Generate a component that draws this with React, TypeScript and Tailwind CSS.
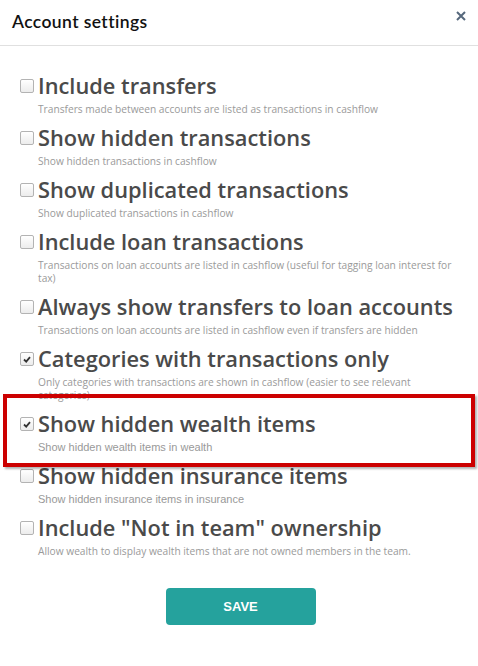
import React from "react";

interface Setting {
  id: string;
  label: string;
  hint: string;
  checked: boolean;
  plainHint?: boolean;
}

const settings: Setting[] = [
  {
    id: "transfers",
    label: "Include transfers",
    hint: "Transfers made between accounts are listed as transactions in cashflow",
    checked: false,
  },
  {
    id: "hidden",
    label: "Show hidden transactions",
    hint: "Show hidden transactions in cashflow",
    checked: false,
  },
  {
    id: "duplicated",
    label: "Show duplicated transactions",
    hint: "Show duplicated transactions in cashflow",
    checked: false,
  },
  {
    id: "loan",
    label: "Include loan transactions",
    hint: "Transactions on loan accounts are listed in cashflow (useful for tagging loan interest for tax)",
    checked: false,
  },
  {
    id: "loanTransfers",
    label: "Always show transfers to loan accounts",
    hint: "Transactions on loan accounts are listed in cashflow even if transfers are hidden",
    checked: false,
  },
  {
    id: "categories",
    label: "Categories with transactions only",
    hint: "Only categories with transactions are shown in cashflow (easier to see relevant categories)",
    checked: true,
  },
  {
    id: "wealth",
    label: "Show hidden wealth items",
    hint: "Show hidden wealth items in wealth",
    checked: true,
    plainHint: true,
  },
  {
    id: "insurance",
    label: "Show hidden insurance items",
    hint: "Show hidden insurance items in insurance",
    checked: false,
    plainHint: true,
  },
  {
    id: "team",
    label: 'Include "Not in team" ownership',
    hint: "Allow wealth to display wealth items that are not owned members in the team.",
    checked: false,
  },
];

function Checkbox({ checked }: { checked: boolean }) {
  return (
    <span className="mt-[7px] flex h-[14px] w-[14px] shrink-0 items-center justify-center rounded-[2px] border border-[#b3b3b3] bg-gradient-to-b from-white to-[#ececec]">
      {checked && (
        <svg width="8" height="7" viewBox="0 0 8 7">
          <path d="M1 3.5 L3.2 5.6 L7 1.2" fill="none" stroke="#333" strokeWidth="1.8" />
        </svg>
      )}
    </span>
  );
}

export default function App() {
  return (
    <div className="relative h-[666px] w-[478px] bg-white" style={{ fontFamily: "'Open Sans', sans-serif" }}>
      <div className="flex h-[46px] items-center justify-between border-b border-[#e0e0e0] pl-3 pr-3">
        <h1 className="font-['Lato',sans-serif] text-[17.5px] font-semibold tracking-[0.4px] text-[#111]">Account settings</h1>
        <button className="mb-[14px] text-[#56687c]">
          <svg width="10" height="10" viewBox="0 0 10 10">
            <path d="M1 1 L9 9 M9 1 L1 9" stroke="currentColor" strokeWidth="2" />
          </svg>
        </button>
      </div>

      <div className="pl-5 pr-4 pt-[26px]">
        {settings.map((s) => (
          <div key={s.id} className="mb-[8px] flex gap-1">
            <Checkbox checked={s.checked} />
            <div>
              <div className="text-[21.8px] font-semibold leading-[28px] text-[#4a4a4a]">{s.label}</div>
              <div
                className={
                  s.plainHint
                    ? "pt-[3px] font-['Liberation_Sans',sans-serif] text-[11px] leading-[13px] text-[#999]"
                    : "pt-[3px] text-[10.2px] leading-[13px] text-[#9a9a9a]"
                }
              >
                {s.hint}
              </div>
            </div>
          </div>
        ))}
      </div>

      <div className="mt-[30px] flex justify-center pl-[3px]">
        <button className="h-[37px] w-[150px] rounded-[4px] bg-[#25a29d] font-['Liberation_Sans',sans-serif] text-[13px] font-bold text-white">
          SAVE
        </button>
      </div>

      {/* highlight frame */}
      <div className="pointer-events-none absolute left-[3px] top-[394px] h-[73px] w-[472px] border-4 border-[#cc0000] shadow-[2px_2px_2px_rgba(0,0,0,0.3)]" />
    </div>
  );
}
